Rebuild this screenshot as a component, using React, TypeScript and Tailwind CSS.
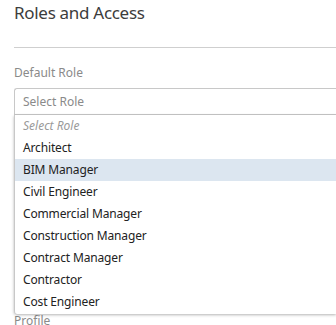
import { useState } from 'react'

const roles = [
  'Architect',
  'BIM Manager',
  'Civil Engineer',
  'Commercial Manager',
  'Construction Manager',
  'Contract Manager',
  'Contractor',
  'Cost Engineer',
]

export default function App() {
  const [hovered] = useState('BIM Manager')

  return (
    <div className="h-[325px] w-[336px] overflow-hidden bg-white font-['Noto_Sans',sans-serif]">
      <div className="pl-[14px] pt-[1px]">
        <h2 className="text-[17px] leading-[24px] tracking-[-0.3px] text-[#3c3c3c]">Roles and Access</h2>

        <div className="mt-[22px] h-px bg-[#cfcfcf]" />

        <div className="mt-[17px] text-[12px] leading-[16px] text-[#8a8a8a]">Default Role</div>

        <div className="relative mt-[7px]">
          <div className="flex h-[27px] items-center rounded-tl-[3px] border border-r-0 border-[#c8c8c8] pl-[8px] text-[12px] text-[#8a8a8a]">
            Select Role
          </div>

          {/* open dropdown list */}
          <div className="absolute left-0 right-0 top-[27px] z-10 rounded-bl-[3px] border-l border-[#c8c8c8] bg-white pb-[1px] shadow-[0_1px_3px_rgba(0,0,0,0.3)]">
            <div className="flex h-[22px] items-center pl-[8px] text-[12px] italic text-[#9a9a9a]">Select Role</div>
            {roles.map((r) => (
              <div
                key={r}
                className={`flex h-[22px] items-center pl-[8px] text-[12px] tracking-[-0.15px] text-[#222] ${
                  r === hovered ? 'bg-[#dce6f0]' : ''
                }`}
              >
                {r}
              </div>
            ))}
          </div>
        </div>

        <div className="mt-[198px] text-[12px] leading-[16px] text-[#8a8a8a]">Profile</div>
      </div>
    </div>
  )
}
